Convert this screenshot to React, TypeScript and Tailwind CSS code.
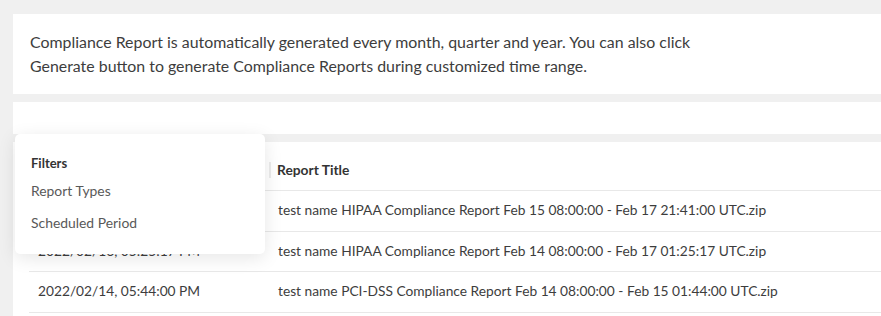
import React from "react";

const rows = [
  { date: "2022/02/17, 09:41:00 PM", title: "test name HIPAA Compliance Report Feb 15 08:00:00 - Feb 17 21:41:00 UTC.zip" },
  { date: "2022/02/16, 05:25:17 PM", title: "test name HIPAA Compliance Report Feb 14 08:00:00 - Feb 17 01:25:17 UTC.zip" },
  { date: "2022/02/14, 05:44:00 PM", title: "test name PCI-DSS Compliance Report Feb 14 08:00:00 - Feb 15 01:44:00 UTC.zip" },
];

export default function App() {
  return (
    <div
      className="relative w-[881px] h-[316px] overflow-hidden bg-[#f0f0f0] text-[#3d3d3d]"
      style={{ fontFamily: "Lato, 'Open Sans', sans-serif" }}
    >
      <div className="flex flex-col gap-[8px] pt-[14px] pl-[13px] w-[920px]">
        <div className="bg-white px-[17px] py-[16px] text-[15.9px] leading-[24px]">
          <p>Compliance Report is automatically generated every month, quarter and year. You can also click</p>
          <p>Generate button to generate Compliance Reports during customized time range.</p>
        </div>
        <div className="bg-white h-[32px]" />
        <div className="bg-white pt-[8px] pl-[16px] h-[200px]">
          <div className="flex h-[41px] items-center border-b border-[#e8e8e8] text-[13.8px] font-bold text-[#333]">
            <div className="w-[240px] h-full" />
            <div className="flex items-center">
              <span className="w-[2px] h-[16px] bg-[#ececec]" />
              <span className="pl-[6px]">Report Title</span>
            </div>
          </div>
          {rows.map((r) => (
            <div key={r.title} className="flex h-[40.5px] items-center border-b border-[#e8e8e8] text-[13.75px]">
              <div className="w-[241px] pl-[9px]">{r.date}</div>
              <div className="pl-[8px]">{r.title}</div>
            </div>
          ))}
        </div>
      </div>
      <div className="absolute left-[15px] top-[134px] w-[250px] h-[120px] bg-white rounded-[5px] shadow-[0_4px_18px_rgba(0,0,0,0.1)] pl-[16px] pt-[21px] text-[13.9px]">
        <div className="font-bold text-[#333] leading-[16px] text-[13px]">Filters</div>
        <div className="mt-[12px] text-[#595959] leading-[16px]">Report Types</div>
        <div className="mt-[16px] text-[#595959] leading-[16px]">Scheduled Period</div>
      </div>
    </div>
  );
}
